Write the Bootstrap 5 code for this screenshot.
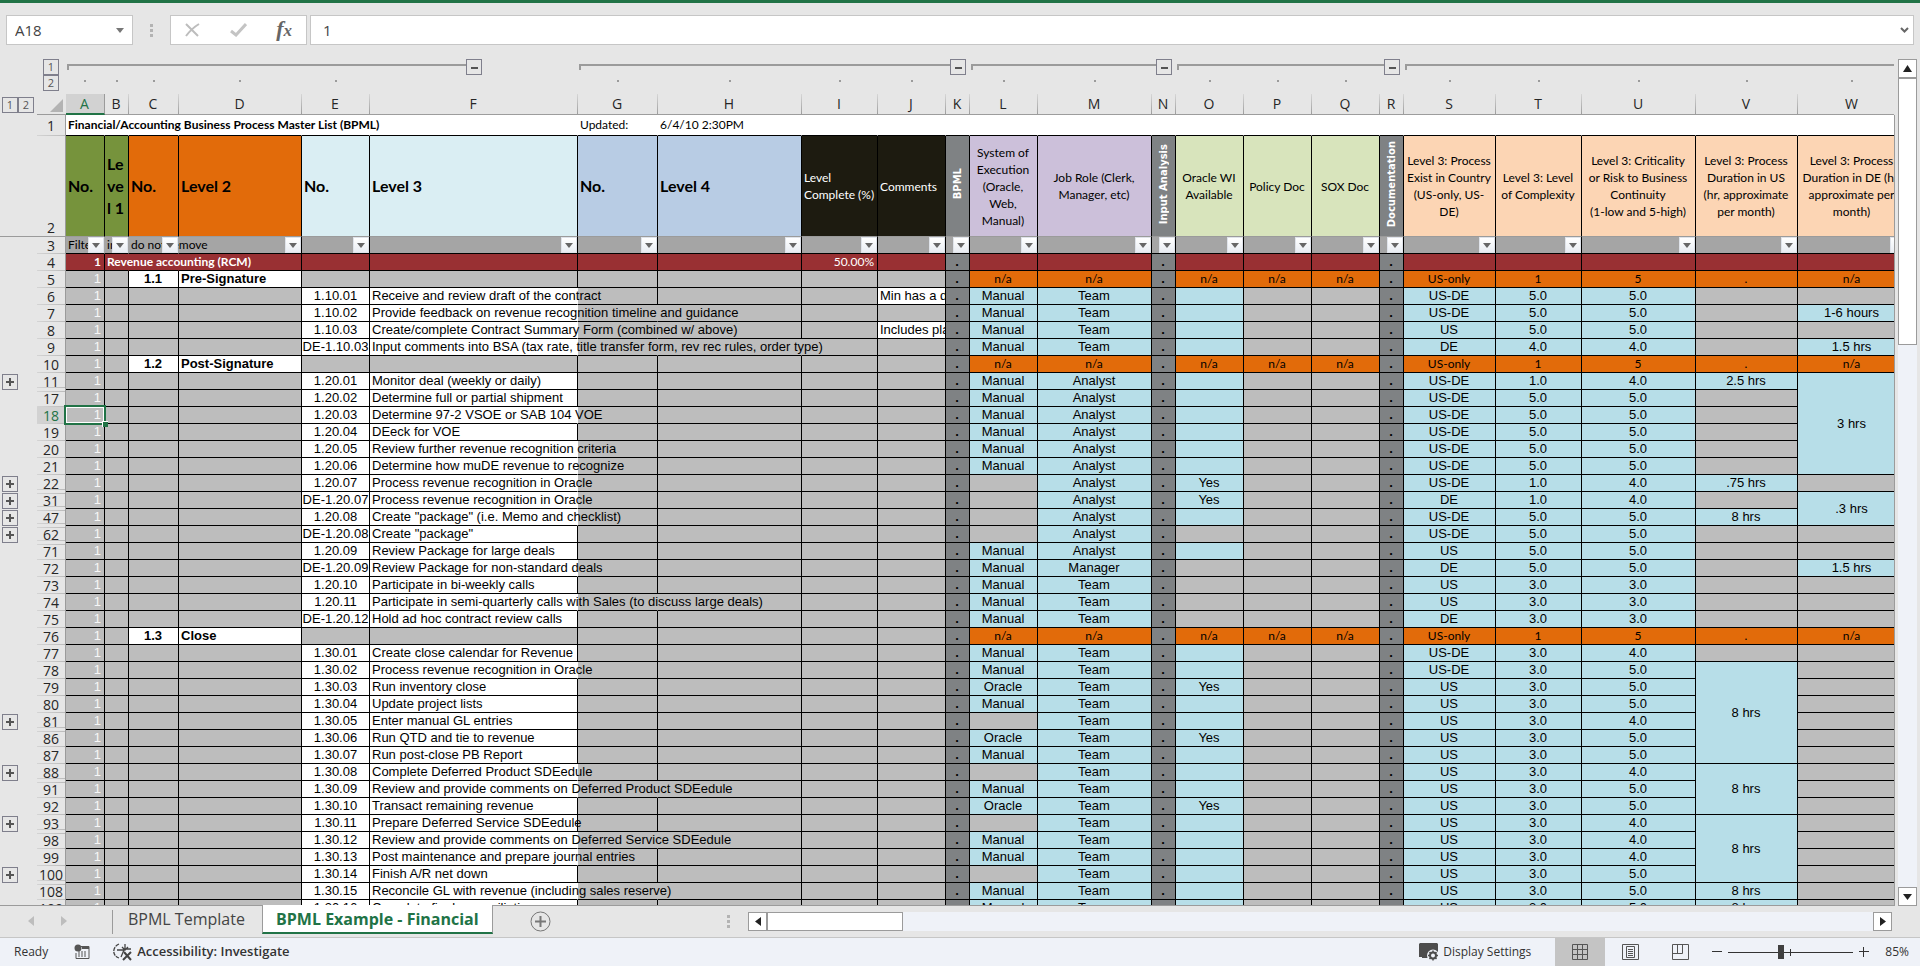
<!DOCTYPE html>
<html lang="en">
<head>
<meta charset="utf-8">
<meta name="viewport" content="width=device-width, initial-scale=1">
<title>BPML Example - Financial</title>
<link href="https://cdn.jsdelivr.net/npm/bootstrap@5.3.0/dist/css/bootstrap.min.css" rel="stylesheet">
<script src="https://cdn.jsdelivr.net/npm/bootstrap@5.3.0/dist/js/bootstrap.bundle.min.js" defer></script>
<style>
:root{--chrome:#e6e6e6;--rule:#9b9b9b;--soft:#c6c6c6;--green:#217346;--panel:#eff2f8;--gray:#bdbdbd;--blue:#b7dee8;--orange:#e26b0a}
body{background:var(--chrome);font-family:"Open Sans","Noto Sans",sans-serif;color:#262626;font-size:14px;border-top:3px solid var(--green)}
button{border:0;background:none;padding:0;color:inherit}
svg{display:block}
.formula-bar{padding:12px 6px 0}
.chrome-box{background:#fff;border:1px solid var(--soft);height:30px}
.chrome-box input{border:0;outline:0;font-size:15px;line-height:20px;color:#444;background:none;min-width:0}
.name-box{width:127px}
.fx-box{width:137px;padding:0 14px}
.fx-glyph{font-family:"Liberation Serif",serif;font-style:italic;font-weight:700;font-size:22px;line-height:24px;color:#666}
.fx-glyph span{font-size:17px}
.grip{width:3px;height:13px;background:repeating-linear-gradient(#b3b3b3 0 3px,transparent 3px 5px)}
.viewport{overflow:hidden;min-width:0;border-bottom:1px solid var(--rule)}
.viewport-edge{width:1px;background:var(--rule);margin-top:70px}

.grid-table{table-layout:fixed;width:100px;border-collapse:separate;border-spacing:0}
.grid-table th,.grid-table td{padding:0 3px 0 2px;white-space:nowrap;font-weight:400;text-align:center;vertical-align:middle}
.grid-table .gut,.grid-table .num{background:var(--chrome);padding:0}
.level-row th,.dot-row th{padding:0 1px 0 0!important}
.level-row th{height:30px;vertical-align:bottom!important}
.level-row .line{background:linear-gradient(var(--rule),var(--rule)) 0 19px/100% 2px no-repeat}
.level-row .start{background:linear-gradient(var(--rule),var(--rule)) right 19px/calc(100% - 1px) 2px no-repeat,linear-gradient(var(--rule),var(--rule)) 1px 19px/2px 6px no-repeat}
.level-row .stop{background:linear-gradient(var(--rule),var(--rule)) 0 19px/50% 2px no-repeat}
.dot-row th{height:19px;vertical-align:top!important}
.dot-row .tick{width:2px;height:2px;background:var(--rule);margin:5px auto 0}
.step{width:16px;height:16px;border:1px solid #7f7f8c;background:var(--chrome);display:block;font-size:11px;line-height:14px;color:#555;text-align:center}
.letter-row th{height:21px;line-height:20px;border-bottom:1px solid var(--rule);border-right:1px solid;border-image:linear-gradient(#d9d9d9,var(--rule)) 1}
.letter-row .gut,.letter-row .corner{border:0}
.grid-table .corner{padding:2px 3px 0 0;border-bottom:1px solid var(--rule)}
.letter-row .picked{background:#d2d2d2;color:var(--green);border-image:none;border-right-color:var(--rule);border-bottom:2px solid var(--green);line-height:19px}

.grid-table tbody td,.grid-table .num,.grid-table tbody .gut{height:17px;line-height:16px}
.grid-table tbody td:not(.gut){border-right:1px solid #000;border-bottom:1px solid #000;font-family:"Liberation Sans",Arial,sans-serif;font-size:13px;color:#000}
.grid-table tbody .num{font-size:14px;border-right:1px solid var(--rule);background:var(--chrome) linear-gradient(90deg,#d4d4d4,#bbb) 0 100%/100% 1px no-repeat}
.grid-table tbody .num.fold{background-position:0 14px}
.grid-table tbody .num.after{background:linear-gradient(90deg,#d4d4d4,#bbb) 0 100%/100% 1px no-repeat,linear-gradient(90deg,#d4d4d4,#bbb) 0 1px/100% 1px no-repeat}
.grid-table tbody .num.after.fold{background-position:0 14px,0 1px}
.grid-table tbody .num.picked{background-color:#d2d2d2;color:var(--green)}
.grid-table tbody .lft{text-align:left}
.grid-table tbody .rgt{text-align:right}
.grid-table tbody .clip{overflow:hidden}
.grid-table tbody td.open:not(.gut){border-right-color:transparent}
.g{background:var(--gray)}
.w{background:#fff}
.b{background:var(--blue)}
.o{background:var(--orange)}
.r{background:#993033}
.k{background:#7f8284}
.grid-table tbody .k,.grid-table tbody .strong{font-weight:700}
.grid-table tbody td.ghost:not(.gut){color:#f7f7f7}
.grid-table tbody td.lato:not(.gut){font-family:Lato,"Open Sans",sans-serif;font-size:12px}
.grid-table tbody .title-row td:not(.gut){height:21px;border-right-color:#fff;background:#fff}
.grid-table tbody .title-row .num{height:21px}
.grid-table tbody .head-row td:not(.gut){height:101px;line-height:17px;border-bottom-color:var(--rule);overflow:hidden}
.grid-table tbody .head-row td.big:not(.gut){font-size:16px;line-height:22px;font-weight:700;text-align:left}
.grid-table tbody .head-row .num,.grid-table tbody .head-row .gut{height:101px;vertical-align:bottom;border-bottom:1px solid var(--rule);background-image:none}
.grid-table tbody .head-row .upright{padding:0}
.upright span{writing-mode:vertical-rl;transform:rotate(180deg);font:700 10px/14px "DejaVu Sans",sans-serif;color:#fff;display:inline-block}
.grid-table tbody .filter-row td:not(.gut){background:#a5a5a5;position:relative;text-align:left}
.filter-row td.over{z-index:1}
.drop{position:absolute;right:0;bottom:0;width:16px;height:16px;background:linear-gradient(#fff,#e9edf3);border:1px solid #dfe3ea;display:flex;align-items:center;justify-content:center}
.grid-table tbody .chosen{position:relative}
.marquee{position:absolute;inset:-2px;border:2px solid var(--green);box-shadow:inset 0 0 0 1px #fff;pointer-events:none}
.marquee::after{content:"";position:absolute;right:-4px;bottom:-4px;width:6px;height:6px;background:var(--green);border:solid #fff;border-width:1px 0 0 1px}

.scroll-v{width:19px;margin:14px 3px 0}
.scroll-v button,.scroll-h button{background:#fff;border:1px solid var(--rule);display:flex;align-items:center;justify-content:center;flex:none;width:19px;height:19px}
.scroll-h{background:var(--panel);height:19px;margin:6px 28px 0 0}
.track-v{background:var(--panel);flex:1 1 0}
.thumb-v{height:33%;background:#fff;border:1px solid var(--rule)}
.thumb-h{width:136px;background:#fff;border:1px solid var(--rule)}
.tab-strip{height:31px}
.tab-left{width:719px}
.tab-arrows{gap:27px;padding:10px 45px 0 28px}
.sheet-tab{font-size:16px;line-height:26px;color:#444;text-decoration:none;padding:0 17px 0 15px;white-space:nowrap}
.sheet-tab.current{background:#fff;color:var(--green);font-weight:700;border:solid var(--rule);border-width:0 1px;padding:1px 0 0;text-align:center;height:29px;margin-top:-1px;border-bottom:2px solid var(--green);width:231px}
.add-tab{margin:5px 0 0 37px}
.tab-rule{width:1px;height:24px;background:var(--rule)}
.status{height:29px;background:var(--panel);border-top:1px solid var(--soft);font-size:12px;color:#333}
.a11y-check{gap:4px;margin-left:23px;font-size:13px;font-weight:600}
.view-btn{width:50px;height:28px;display:flex;align-items:center;justify-content:center}
.view-btn.current{background:#c4c4c4}
.zoom-range{appearance:none;-webkit-appearance:none;width:125px;height:14px;margin:0;background:linear-gradient(#333,#333) 50% 50%/100% 1px no-repeat,linear-gradient(#333,#333) 62px 50%/1px 7px no-repeat}
.zoom-range::-webkit-slider-thumb{-webkit-appearance:none;width:6px;height:14px;background:#404040}
</style>
</head>
<body class="vh-100 d-flex flex-column overflow-hidden">

<header class="formula-bar d-flex align-items-center flex-shrink-0">
  <div class="chrome-box name-box d-flex align-items-center">
    <input class="flex-grow-1 w-50 ps-2" aria-label="Name box" value="A18">
    <button class="px-2" aria-label="Open name list"><svg width="8" height="5"><path d="M0 0h8L4 5z" fill="#777"/></svg></button>
  </div>
  <div class="grip" style="margin:0 17px"></div>
  <div class="chrome-box fx-box d-flex align-items-center justify-content-between">
    <button disabled aria-label="Cancel"><svg width="15" height="14" viewBox="0 0 15 14" fill="none" stroke="#bdbdbd" stroke-width="2"><path d="M1 1l12 12M14 1C9 4 4 9 1 13"/></svg></button>
    <button disabled aria-label="Enter"><svg width="17" height="14" viewBox="0 0 17 14" fill="none" stroke="#c4c4c4" stroke-width="3"><path d="M1 8l5 4L16 1"/></svg></button>
    <button class="fx-glyph" aria-label="Insert function">f<span>x</span></button>
  </div>
  <div class="chrome-box flex-grow-1 d-flex align-items-center ps-2" style="margin-left:3px">
    <input class="flex-grow-1 px-1" aria-label="Formula" value="1">
    <button class="px-1" aria-label="Expand formula bar"><svg width="9" height="6" fill="none" stroke="#666" stroke-width="2"><path d="M1 1l3.500 3.500L8 1"/></svg></button>
  </div>
</header>

<main class="d-flex flex-grow-1 overflow-hidden">
  <div class="viewport flex-grow-1">
    <table class="grid-table" id="sheet"><colgroup id="cols"></colgroup><thead id="head"></thead><tbody id="body"></tbody></table>
  </div>
  <div class="viewport-edge"></div>
  <div class="scroll-v d-flex flex-column">
    <button aria-label="Scroll up"><svg width="9" height="7"><path d="M0 7h9L4.500 0z" fill="#222"/></svg></button>
    <div class="track-v"><div class="thumb-v"></div></div>
    <button aria-label="Scroll down"><svg width="9" height="6"><path d="M0 0h9L4.500 6z" fill="#222"/></svg></button>
  </div>
</main>

<nav class="tab-strip d-flex flex-shrink-0" aria-label="Sheets">
  <div class="tab-left d-flex align-items-start flex-shrink-0">
    <div class="tab-arrows d-flex align-items-center">
      <button aria-label="Previous sheet"><svg width="6" height="10"><path d="M6 0v10L0 5z" fill="#bdbdbd"/></svg></button>
      <button aria-label="Next sheet"><svg width="6" height="10"><path d="M0 0v10l6-5z" fill="#bdbdbd"/></svg></button>
    </div>
    <div class="tab-rule mt-1"></div>
    <a class="sheet-tab" href="#template">BPML Template</a>
    <a class="sheet-tab current" href="#financial" aria-current="page">BPML Example - Financial</a>
    <button class="add-tab" aria-label="New sheet"><svg width="21" height="21" fill="none" stroke="#777"><circle cx="10.500" cy="10.500" r="9.500"/><path d="M10.500 5v11M5 10.500h11" stroke-width="2"/></svg></button>
  </div>
  <div class="grip" style="margin:9px 18px 0 8px"></div>
  <div class="scroll-h d-flex flex-grow-1">
    <button aria-label="Scroll left"><svg width="6" height="9"><path d="M6 0v9L0 4.500z" fill="#222"/></svg></button>
    <div class="thumb-h me-auto"></div>
    <button aria-label="Scroll right"><svg width="6" height="9"><path d="M0 0v9l6-4.500z" fill="#222"/></svg></button>
  </div>
</nav>

<footer class="status d-flex align-items-center flex-shrink-0">
  <span style="margin:0 26px 0 14px">Ready</span>
  <button aria-label="Record macro"><svg width="16" height="16" viewBox="0 0 16 16" fill="none" stroke="#555"><path d="M7 2.500h8v12H2V9"/><path d="M8 3.500h7" stroke-width="3"/><path d="M4 8h9M4 10h9M4 12h9" stroke-dasharray="2 1"/><circle cx="4" cy="4" r="3.500" fill="#555" stroke="none"/></svg></button>
  <button class="a11y-check d-flex align-items-center"><svg width="20" height="18" viewBox="0 0 20 18" fill="none" stroke="#444" stroke-width="1.300"><path d="M6 1C-1 4-1 13 6 15" stroke-dasharray="4 1"/><path d="M12 1v5M9 4l3 3 3-3M4 7h7l-3 7M13 6h5"/><path d="M11 9l7 8M18 9l-8 8" stroke-width="2"/></svg>Accessibility: Investigate</button>
  <button class="ms-auto d-flex align-items-center gap-1 me-4"><svg width="20" height="18" viewBox="0 0 20 18"><path d="M1 0h17l1 1v9h-9v5H3v-1H0V1z" fill="#4d4d4d"/><circle cx="14" cy="12.500" r="4" fill="none" stroke="#eff2f8" stroke-width="4"/><circle cx="14" cy="12.500" r="3" fill="none" stroke="#4d4d4d" stroke-width="2"/><path d="M14 7.500v2m0 6v2M9 12.500h2m6 0h2M10.500 9l1.500 1.500m4 4l1.500 1.500m0-7l-1.500 1.500m-4 4l-1.500 1.500" stroke="#4d4d4d" stroke-width="1.500"/></svg>Display Settings</button>
  <button class="view-btn current" aria-label="Normal view"><svg width="16" height="16" fill="none" stroke="#555"><path d="M.5.5h15v15H.5zM.5 5.500h15M.5 10.500h15M5.500.5v15M10.500.5v15"/></svg></button>
  <button class="view-btn" aria-label="Page layout view"><svg width="17" height="16" fill="none" stroke="#555"><path d="M.5.5h16v15H.5zM4.500 2.500h8v11h-8zM6 5.500h5M6 7.500h5M6 9.500h5M6 11.500h5"/></svg></button>
  <button class="view-btn" aria-label="Page break preview"><svg width="17" height="16" fill="none" stroke="#555"><path d="M.5.5h16v15H.5zM.5 9.500h10v-9M5.500.5v9"/></svg></button>
  <button aria-label="Zoom out" style="margin:0 6px 0 7px"><svg width="10" height="10" stroke="#333"><path d="M0 4.500h10"/></svg></button>
  <input class="zoom-range" type="range" min="0" max="100" value="42" aria-label="Zoom">
  <button aria-label="Zoom in" style="margin:0 16px 0 6px"><svg width="10" height="10" stroke="#333"><path d="M0 4.500h10M4.500 0v10"/></svg></button>
  <button style="margin-right:11px">85%</button>
</footer>

<script>
// Column letter -> width
const widths = {A:39,B:24,C:50,D:123,E:68,F:208,G:80,H:144,I:76,J:68,K:24,L:68,M:114,N:24,O:68,P:68,Q:68,R:24,S:92,T:86,U:114,V:102,W:109};
const letters = Object.keys(widths);
const starts = 'AGLOS', stops = 'FKNR';
const step = (t, label) => `<button class="step" aria-label="${label}">${t}</button>`;
const sign = d => `<svg width="14" height="14" stroke="#555" stroke-width="2"><path d="${d}"/></svg>`;
const minus = sign('M4 8h7'), plus = sign('M3 7h8M7 3v8');

document.getElementById('cols').innerHTML = [37, 29, ...Object.values(widths)].map(w => `<col style="width:${w}px">`).join('');

document.getElementById('head').innerHTML =
  `<tr class="level-row"><th class="gut"></th><th><div style="margin-left:6px">${step('1', 'Column level 1')}</div></th>` +
  letters.map(c => {
    const k = starts.includes(c) ? 'start' : stops.includes(c) ? 'stop' : 'line';
    return `<th class="${k}">${k === 'stop' ? `<div class="d-flex justify-content-center">${step(minus, 'Collapse columns')}</div>` : ''}</th>`;
  }).join('') +
  `</tr><tr class="dot-row"><th class="gut"></th><th><div style="margin-left:6px">${step('2', 'Column level 2')}</div></th>` +
  letters.map(c => `<th>${stops.includes(c) ? '' : '<div class="tick"></div>'}</th>`).join('') +
  `</tr><tr class="letter-row"><th class="gut"><div class="d-flex" style="margin-left:2px">${step('1', 'Row level 1')}${step('2', 'Row level 2')}</div></th>` +
  `<th class="corner"><svg class="ms-auto" width="13" height="13"><path d="M13 0v13H0z" fill="#b3b3b3"/></svg></th>` +
  letters.map(c => `<th class="${c === 'A' ? 'picked' : ''}">${c}</th>`).join('') + '</tr>';

const td = (cls, text = '', extra = '') => `<td class="${cls}"${extra}>${text}</td>`;
const tr = (n, cells, rowCls = '', numCls = '', gut = '') =>
  `<tr class="${rowCls}"><td class="gut">${gut}</td><th class="num ${numCls}">${n}</th>${cells}</tr>`;

// Rows 1-4
const title = letters.map(c => ({
  A: td('lft lato strong', 'Financial/Accounting Business Process Master List (BPML)'),
  G: td('lft lato', 'Updated:'), H: td('lft lato', '6/4/10 2:30PM')
}[c] || td(''))).join('');

const heads = [
  ['No.', '#76933c', 'big'], ['Le<br>ve<br>l 1', '#76933c', 'big'], ['No.', '#e26b0a', 'big'], ['Level 2', '#e26b0a', 'big'],
  ['No.', '#daeef3', 'big'], ['Level 3', '#daeef3', 'big'], ['No.', '#b8cce4', 'big'], ['Level 4', '#b8cce4', 'big'],
  ['Level<br>Complete (%)', '#1d1b10', 'lft text-white'], ['Comments', '#1d1b10', 'lft text-white'], ['BPML', '', 'upright k'],
  ['System of<br>Execution<br>(Oracle,<br>Web,<br>Manual)', '#ccc0da', ''], ['Job Role (Clerk,<br>Manager, etc)', '#ccc0da', ''],
  ['Input Analysis', '', 'upright k'], ['Oracle WI<br>Available', '#d8e4bc', ''], ['Policy Doc', '#d8e4bc', ''], ['SOX Doc', '#d8e4bc', ''],
  ['Documentation', '', 'upright k'], ['Level 3: Process<br>Exist in Country<br>(US-only, US-<br>DE)', '#fcd5b4', ''],
  ['Level 3: Level<br>of Complexity', '#fcd5b4', ''], ['Level 3: Criticality<br>or Risk to Business<br>Continuity<br>(1-low and 5-high)', '#fcd5b4', ''],
  ['Level 3: Process<br>Duration in US<br>(hr, approximate<br>per month)', '#fcd5b4', ''],
  ['Level 3: Process<br>Duration in DE (hr,<br>approximate per<br>month)', '#fcd5b4', '']
].map(([t, c, k]) => k.startsWith('upright') ? td(k, `<span>${t}</span>`) : td('lato ' + k, t, ` style="background:${c}"`)).join('');

const notes = {A: 'Filters', B: 'in', C: 'do not remove'};
const filters = letters.map(c => td('lato' + ('ABC'.includes(c) ? ' open' : '') + (c === 'C' ? ' over' : ''),
  (notes[c] || '') + `<button class="drop" aria-label="Filter column ${c}"><svg width="8" height="5"><path d="M0 0h8L4 5z" fill="#666"/></svg></button>`)).join('');

const total = letters.map(c => 'KNR'.includes(c) ? td('k', '.') :
  c === 'A' ? td('r lato strong rgt text-white', '1') :
  c === 'B' ? td('r lato strong lft text-white open', 'Revenue accounting (RCM)') :
  c === 'I' ? td('r lato rgt text-white', '50.00%') : td('r' + (c === 'C' ? ' open' : ''))).join('');

// row | no. | activity | columns the text runs over | system | role | oracle | where | complexity | criticality
const data = `5|1.1|Pre-Signature
6|1.10.01|Receive and review draft of the contract|1|Manual|Team||US-DE|5|5
7|1.10.02|Provide feedback on revenue recognition timeline and guidance|2|Manual|Team||US-DE|5|5
8|1.10.03|Create/complete Contract Summary Form (combined w/ above)|2|Manual|Team||US|5|5
9|DE-1.10.03|Input comments into BSA (tax rate, title transfer form, rev rec rules, order type)|3|Manual|Team||DE|4|4
10|1.2|Post-Signature
11|1.20.01|Monitor deal (weekly or daily)|0|Manual|Analyst||US-DE|1|4
17|1.20.02|Determine full or partial shipment|0|Manual|Analyst||US-DE|5|5
18|1.20.03|Determine 97-2 VSOE or SAB 104 VOE|1|Manual|Analyst||US-DE|5|5
19|1.20.04|DEeck for VOE|0|Manual|Analyst||US-DE|5|5
20|1.20.05|Review further revenue recognition criteria|1|Manual|Analyst||US-DE|5|5
21|1.20.06|Determine how muDE revenue to recognize|1|Manual|Analyst||US-DE|5|5
22|1.20.07|Process revenue recognition in Oracle|1||Analyst|Yes|US-DE|1|4
31|DE-1.20.07|Process revenue recognition in Oracle|1||Analyst|Yes|DE|1|4
47|1.20.08|Create "package" (i.e. Memo and checklist)|1||Analyst||US-DE|5|5
62|DE-1.20.08|Create "package"|0||Analyst|-|US-DE|5|5
71|1.20.09|Review Package for large deals|0|Manual|Analyst||US|5|5
72|DE-1.20.09|Review Package for non-standard deals|1|Manual|Manager|-|DE|5|5
73|1.20.10|Participate in bi-weekly calls|0|Manual|Team|-|US|3|3
74|1.20.11|Participate in semi-quarterly calls with Sales (to discuss large deals)|2|Manual|Team|-|US|3|3
75|DE-1.20.12|Hold ad hoc contract review calls|0|Manual|Team|-|DE|3|3
76|1.3|Close
77|1.30.01|Create close calendar for Revenue|0|Manual|Team||US-DE|3|4
78|1.30.02|Process revenue recognition in Oracle|1|Manual|Team||US-DE|3|5
79|1.30.03|Run inventory close|0|Oracle|Team|Yes|US|3|5
80|1.30.04|Update project lists|0|Manual|Team||US|3|5
81|1.30.05|Enter manual GL entries|0||Team||US|3|4
86|1.30.06|Run QTD and tie to revenue|0|Oracle|Team|Yes|US|3|5
87|1.30.07|Run post-close PB Report|0|Manual|Team||US|3|5
88|1.30.08|Complete Deferred Product SDEedule|1||Team||US|3|4
91|1.30.09|Review and provide comments on Deferred Product SDEedule|2|Manual|Team||US|3|5
92|1.30.10|Transact remaining revenue|0|Oracle|Team|Yes|US|3|5
93|1.30.11|Prepare Deferred Service SDEedule|0||Team||US|3|4
98|1.30.12|Review and provide comments on Deferred Service SDEedule|2|Manual|Team||US|3|4
99|1.30.13|Post maintenance and prepare journal entries|1|Manual|Team||US|3|4
100|1.30.14|Finish A/R net down|0||Team||US|3|5
108|1.30.15|Reconcile GL with revenue (including sales reserve)|2|Manual|Team||US|3|5
109|1.30.16|Complete final reconciliation|0|Manual|Team||US|3|5`.split('\n').map(l => l.split('|'));

const comments = {6: 'Min has a draft', 8: 'Includes plan'};
// Durations: row -> [text, rows spanned]
const usTime = {11: ['2.5 hrs', 1], 22: ['.75 hrs', 1], 47: ['8 hrs', 1], 78: ['8 hrs', 6], 88: ['8 hrs', 3], 93: ['8 hrs', 4], 108: ['8 hrs', 1], 109: ['8 hrs', 1]};
const deTime = {7: ['1-6 hours', 1], 9: ['1.5 hrs', 1], 11: ['3 hrs', 6], 31: ['.3 hrs', 2], 72: ['1.5 hrs', 1]};

function makeSpan(map) {
  let left = 0;
  return n => {
    if (left > 0) { left--; return ''; }
    const m = map[n];
    if (!m) return td('g');
    left = m[1] - 1;
    return td('b', m[0], m[1] > 1 ? ` rowspan="${m[1]}"` : '');
  };
}
const spanUS = makeSpan(usTime), spanDE = makeSpan(deTime);
const dot = td('k', '.'), g = td('g');

let folded = false;
const rows = data.map(([n, no, text, run, sys, role, ora, where, cx, cr], i) => {
  const first = n === '18' ? td('g rgt ghost chosen', '1<span class="marquee"></span>') : td('g rgt ghost', '1');
  const next = data[i + 1];
  const fold = next && +next[0] !== +n + 1;
  const numCls = (folded ? 'after ' : '') + (fold ? 'fold ' : '') + (n === '18' ? 'picked' : '');
  folded = fold;
  let cells;
  if (run === undefined) {
    const na = td('o lato', 'n/a');
    cells = first + g + td('w strong', no) + td('w strong lft', text) + g.repeat(6) + dot + na + na + dot + na.repeat(3) + dot +
      td('o lato', 'US-only') + td('o lato', '1') + td('o lato', '5') + td('o lato', '.') + na;
  } else {
    const over = +run;
    cells = first + g.repeat(3) + td('w px-0', no) + td('w lft' + (over > 0 ? ' open' : ''), text) +
      td('g' + (over > 1 ? ' open' : '')) + td('g' + (over > 2 ? ' open' : '')) + g +
      (comments[n] ? td('w lft clip', comments[n]) : g) + dot +
      (sys ? td('b', sys) : g) + td('b', role) + dot +
      (ora === '-' ? g : td('b', ora)) + g + g + dot +
      td('b', where) + td('b', cx + '.0') + td('b', cr + '.0') + spanUS(n) + spanDE(n);
  }
  const gut = fold ? `<div style="margin-left:2px">${step(plus, 'Expand rows after ' + n)}</div>` : '';
  return tr(n, cells, '', numCls, gut);
}).join('');

document.getElementById('body').innerHTML =
  tr(1, title, 'title-row') + tr(2, heads, 'head-row') + tr(3, filters, 'filter-row') + tr(4, total) + rows;
</script>
</body>
</html>
